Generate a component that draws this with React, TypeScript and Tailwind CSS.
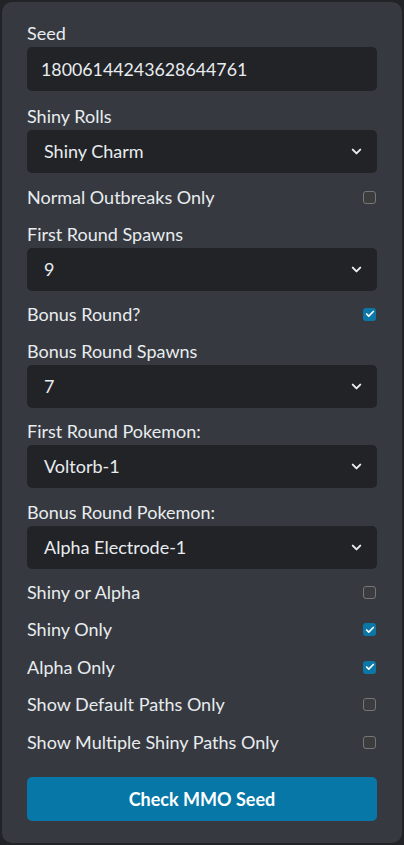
import { ChevronDown, Check } from 'lucide-react'

function Label({ children }: { children: React.ReactNode }) {
  return <div className="h-6 leading-6 text-[18px] text-[#e9ecef] mb-[2px]">{children}</div>
}

function Select({ value }: { value: string }) {
  return (
    <div className="h-[43px] rounded-[5px] bg-[#212327] flex items-center justify-between pl-[17px] pr-[13px] text-[18px] text-[#e9ecef]">
      <span>{value}</span>
      <ChevronDown size={15} strokeWidth={3.2} className="text-[#e9ecef]" />
    </div>
  )
}

function CheckRow({ label, checked }: { label: string; checked?: boolean }) {
  return (
    <div className="h-6 flex items-center justify-between text-[18px] text-[#e9ecef]">
      <span>{label}</span>
      {checked ? (
        <span className="w-[13px] h-[13px] mr-px rounded-[3px] bg-[#0b77a7] flex items-center justify-center">
          <Check size={10} strokeWidth={4} className="text-white" />
        </span>
      ) : (
        <span className="w-[13px] h-[13px] mr-px rounded-[3px] bg-[#3b3c3e] border border-[#767676]" />
      )}
    </div>
  )
}

export default function App() {
  return (
    <div className="min-h-[845px] bg-[#212327] p-[2px]" style={{ fontFamily: 'Lato, "Open Sans", sans-serif' }}>
      <div className="h-[841px] w-[400px] rounded-[10px] bg-[#363a40] px-[25px] pt-[19px]">
        <Label>Seed</Label>
        <div className="h-[44px] rounded-[5px] bg-[#212327] flex items-center pl-[14px] text-[17.8px] text-[#e9ecef]">
          18006144243628644761
        </div>

        <div className="mt-[13px]">
          <Label>Shiny Rolls</Label>
          <Select value="Shiny Charm" />
        </div>

        <div className="mt-[12px]">
          <CheckRow label="Normal Outbreaks Only" />
        </div>

        <div className="mt-[13px]">
          <Label>First Round Spawns</Label>
          <Select value="9" />
        </div>

        <div className="mt-[11px]">
          <CheckRow label="Bonus Round?" checked />
        </div>

        <div className="mt-[13px]">
          <Label>Bonus Round Spawns</Label>
          <Select value="7" />
        </div>

        <div className="mt-[11px]">
          <Label>First Round Pokemon:</Label>
          <Select value="Voltorb-1" />
        </div>

        <div className="mt-[12px]">
          <Label>Bonus Round Pokemon:</Label>
          <Select value="Alpha Electrode-1" />
        </div>

        <div className="mt-[11px] flex flex-col gap-[13.5px]">
          <CheckRow label="Shiny or Alpha" />
          <CheckRow label="Shiny Only" checked />
          <CheckRow label="Alpha Only" checked />
          <CheckRow label="Show Default Paths Only" />
          <CheckRow label="Show Multiple Shiny Paths Only" />
        </div>

        <button className="mt-[23px] w-full h-[44px] rounded-[5px] bg-[#0677a7] text-white font-bold text-[18px]">
          Check MMO Seed
        </button>
      </div>
    </div>
  )
}
